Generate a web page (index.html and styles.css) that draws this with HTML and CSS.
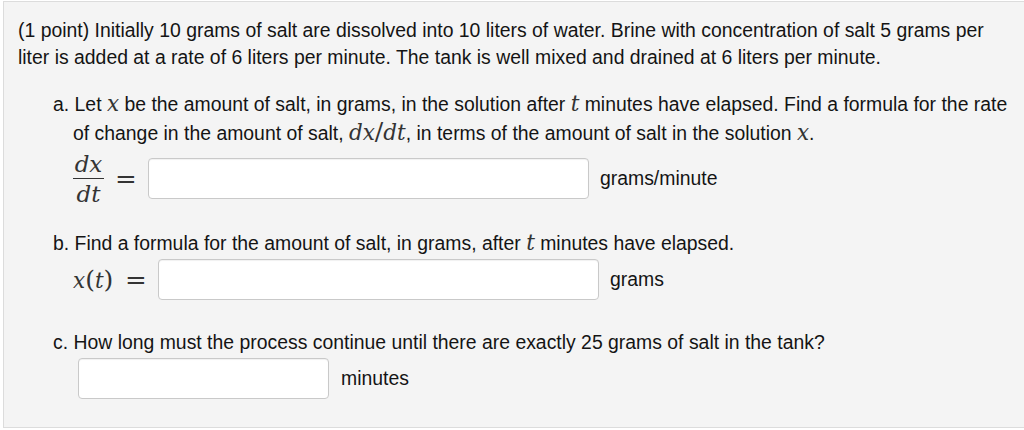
FILE: index.html
```html
<!DOCTYPE html>
<html>
<head>
<meta charset="utf-8">
<link rel="stylesheet" href="styles.css">
</head>
<body>
<div class="panel">
  <p class="intro">(1 point) Initially 10 grams of salt are dissolved into 10 liters of water. Brine with concentration of salt 5 grams per liter is added at a rate of 6 liters per minute. The tank is well mixed and drained at 6 liters per minute.</p>

  <div class="part part-a">
    <p class="q">a. Let <span class="m">x</span> be the amount of salt, in grams, in the solution after <span class="m">t</span> minutes have elapsed. Find a formula for the rate of change in the amount of salt, <span class="m">dx</span><span class="slash">/</span><span class="m">dt</span>, in terms of the amount of salt in the solution <span class="m">x</span>.</p>
    <div class="row row-a">
      <span class="frac"><span class="num m">dx</span><span class="den m">dt</span></span>
      <span class="eq eq-a">=</span>
      <span class="box box-a"></span>
      <span class="unit">grams/minute</span>
    </div>
  </div>

  <div class="part part-b">
    <p class="q">b. Find a formula for the amount of salt, in grams, after <span class="m">t</span> minutes have elapsed.</p>
    <div class="row row-b">
      <span class="lhs"><span class="m">x</span><span class="paren">(</span><span class="m">t</span><span class="paren">)</span></span>
      <span class="eq eq-b">=</span>
      <span class="box box-b"></span>
      <span class="unit">grams</span>
    </div>
  </div>

  <div class="part part-c">
    <p class="q">c. How long must the process continue until there are exactly 25 grams of salt in the tank?</p>
    <div class="row row-c">
      <span class="box box-c"></span>
      <span class="unit unit-c">minutes</span>
    </div>
  </div>
</div>
</body>
</html>
```

FILE: styles.css
```css
html, body {
  margin: 0;
  padding: 0;
  background: #ffffff;
}
body {
  font-family: "Liberation Sans", Arial, sans-serif;
  font-size: 19.4px;
  color: #141414;
}
.panel {
  margin: 1px 0 0 3px;
  height: 427px;
  box-sizing: border-box;
  background: #f4f4f4;
  border: 1px solid #dcdcdc;
  border-right: none;
  padding: 15px 6px 0 14px;
}
p { margin: 0; }
.intro {
  line-height: 27px;
}
.part {
  margin-left: 35px;
}
.q {
  padding-left: 20px;
  text-indent: -20px;
  line-height: 29px;
}
.m {
  font-family: "DejaVu Serif", "Liberation Serif", serif;
  font-style: italic;
  font-size: 21.5px;
  line-height: 1;
  color: #333;
}
.slash {
  font-family: "DejaVu Serif", serif;
  font-size: 25px;
  line-height: 1;
  color: #333;
}
.part-a { margin-top: 19px; }
.row {
  display: flex;
  align-items: center;
  padding-left: 20px;
}
.row-a { margin-top: 2px; height: 57px; }
.frac {
  display: inline-flex;
  flex-direction: column;
  align-items: center;
  width: 31px;
  flex: none;
}
.frac .m {
  font-size: 23px;
}
.frac .num {
  border-bottom: 1px solid #333;
  width: 31px;
  text-align: center;
  padding-bottom: 3px;
  line-height: 22px;
}
.frac .den {
  padding-top: 4px;
  line-height: 22px;
}
.eq {
  font-family: "DejaVu Serif", serif;
  font-size: 26px;
  line-height: 1;
  color: #333;
  text-align: center;
  flex: none;
}
.eq-a { width: 44px; }
.eq-b { width: 44px; }
.box {
  display: block;
  flex: none;
  height: 41px;
  box-sizing: border-box;
  background: #fff;
  border: 1px solid #c9c9c9;
  border-radius: 4px;
  box-shadow: inset 0 1px 1px rgba(0,0,0,0.06);
}
.box-a { width: 441px; }
.box-b { width: 441px; }
.box-c { width: 251px; margin-left: 5px; }
.unit {
  margin-left: 11px;
}
.unit-c { margin-left: 12px; }
.part-b { margin-top: 22px; }
.row-b { margin-top: 1px; }
.lhs {
  width: 41px;
  flex: none;
  white-space: nowrap;
}
.paren {
  font-family: "DejaVu Serif", serif;
  font-size: 25px;
  line-height: 1;
  color: #333;
}
.part-c { margin-top: 28px; }
.row-c { margin-top: 1px; }
```
